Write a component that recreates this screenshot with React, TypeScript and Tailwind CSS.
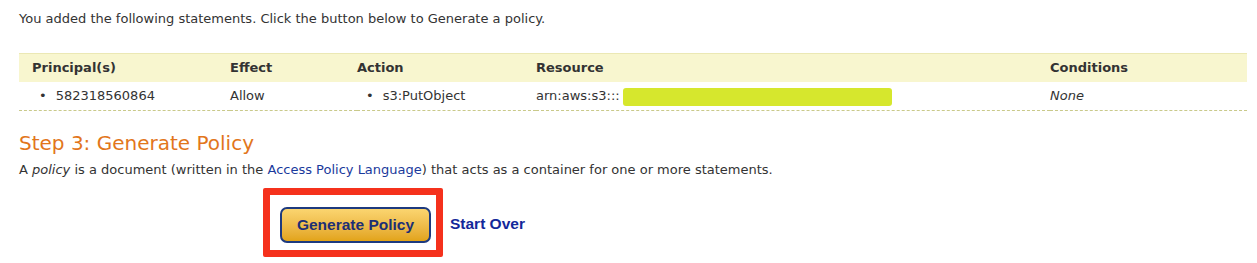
const rows = [
  { principal: "582318560864", effect: "Allow", action: "s3:PutObject", conditions: "None" },
];

export default function App() {
  return (
    <div className="w-[1257px] h-[263px] bg-white text-[#333] text-[13px] px-[19px] pt-[11px] overflow-hidden" style={{ fontFamily: "'DejaVu Sans', Verdana, sans-serif" }}>
      <p className="leading-[16px]">You added the following statements. Click the button below to Generate a policy.</p>

      <table className="mt-[26px] w-[1228px] border-collapse">
        <thead>
          <tr className="bg-[#f8f6cf] border-t border-[#ebe8b4]">
            <th className="text-left font-bold text-[13px] text-[#333] pl-[13px] h-[28px] w-[211px]">Principal(s)</th>
            <th className="text-left font-bold text-[13px] text-[#333] w-[127px]">Effect</th>
            <th className="text-left font-bold text-[13px] text-[#333] w-[179px]">Action</th>
            <th className="text-left font-bold text-[13px] text-[#333] w-[514px]">Resource</th>
            <th className="text-left font-bold text-[13px] text-[#333]">Conditions</th>
          </tr>
        </thead>
        <tbody>
          {rows.map((r) => (
            <tr key={r.principal} className="border-b border-dashed border-[#c9c98a]">
              <td className="h-[29px] pl-[20px]">
                <span className="mr-[9px]">•</span>
                {r.principal}
              </td>
              <td>{r.effect}</td>
              <td className="pl-[9px]">
                <span className="mr-[9px]">•</span>
                {r.action}
              </td>
              <td>
                <span>arn:aws:s3:::</span>
                <span className="inline-block align-middle w-[269px] h-[18px] ml-[3px] bg-[#d6e72d] rounded-[3px]"></span>
              </td>
              <td className="italic">{r.conditions}</td>
            </tr>
          ))}
        </tbody>
      </table>

      <h2 className="mt-[20px] text-[20px] leading-[24px] text-[#e2761b]">Step 3: Generate Policy</h2>
      <p className="mt-[7px] leading-[16px]">
        A <em>policy</em> is a document (written in the <a className="text-[#1a3a9c]">Access Policy Language</a>) that acts as a container for one or more statements.
      </p>

      <div className="mt-[10px] ml-[244px] flex items-center">
        <div className="border-[7px] border-[#f5311c] pl-[10px] pr-[5px] pt-[12px] pb-[7px] rounded-[2px]">
          <button
            className="w-[151px] h-[36px] rounded-[7px] border-2 border-[#1d3a7f] bg-gradient-to-b from-[#fbd56f] to-[#e2a417] text-[#1c2f75] font-bold text-[15.5px]"
            style={{ fontFamily: "'Liberation Sans', Arial, sans-serif" }}
          >
            Generate Policy
          </button>
        </div>
        <a className="ml-[7px] mt-[3px] font-bold text-[15.5px] text-[#13289a]" style={{ fontFamily: "'Liberation Sans', Arial, sans-serif" }}>
          Start Over
        </a>
      </div>
    </div>
  );
}
